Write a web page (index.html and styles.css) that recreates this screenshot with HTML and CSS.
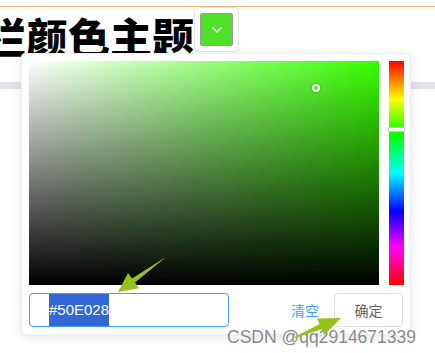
FILE: index.html
```html
<!DOCTYPE html>
<html lang="zh-CN">
<head>
  <meta charset="UTF-8" />
  <meta name="viewport" content="width=device-width, initial-scale=1.0"/>
  <title>栏颜色主题</title>
  <link rel="stylesheet" href="styles.css">
</head>
<body>
  <div class="topline"></div>
  <div class="head">
    <h1 class="title">栏颜色主题</h1>
    <div class="picker">
      <span class="picker-color">
        <svg width="12" height="8" viewBox="0 0 12 8"><path d="M1.5 1.5 L6 6 L10.5 1.5" fill="none" stroke="#fff" stroke-width="1.3"/></svg>
      </span>
    </div>
  </div>
  <div class="divider"></div>

  <div class="dropdown">
    <div class="dropdown-main">
      <div class="svpanel">
        <div class="svpanel-white"></div>
        <div class="svpanel-black"></div>
        <span class="svpanel-cursor"></span>
      </div>
      <div class="hue">
        <span class="hue-thumb"></span>
      </div>
    </div>
    <div class="dropdown-btns">
      <div class="value-input"><span class="selected">#50E028</span></div>
      <span class="link-btn">清空</span>
      <button class="ok-btn">确定</button>
    </div>
  </div>

  <div class="watermark">CSDN @qq2914671339</div>

  <svg class="marks" width="435" height="353" viewBox="0 0 435 353">
    <polygon points="166,257 135,282.6 139,288.2 118,292 128,273.1 132,278.4" fill="#95c11f"/>
    <polygon points="289,340 321.6,329.2 324.2,335 341,318 317,318.4 319.6,324" fill="#95c11f"/>
  </svg>
</body>
</html>
```

FILE: styles.css
```css
body {
  margin: 0;
  width: 435px;
  height: 353px;
  overflow: hidden;
  position: relative;
  background: #fff;
  font-family: 'Liberation Sans', 'Noto Sans CJK SC', sans-serif;
}

.topline {
  height: 6px;
  border-bottom: 1px solid #e9b47a;
}

.head {
  display: flex;
  align-items: flex-start;
  height: 46px;
}

.title {
  margin: 8px 0 0 -16px;
  font-family: 'Noto Sans CJK SC', sans-serif;
  font-size: 42px;
  line-height: 42px;
  font-weight: 900;
  color: #000;
  white-space: nowrap;
}

.picker {
  width: 45px;
  height: 45px;
  box-sizing: border-box;
  padding: 5px;
  border: 1px solid #e6e6e6;
  border-radius: 4px;
}

.picker-color {
  display: flex;
  justify-content: center;
  align-items: center;
  width: 100%;
  height: 100%;
  box-sizing: border-box;
  border: 1px solid #999;
  border-radius: 2px;
  background: #50e028;
}

.divider {
  margin-top: 29px;
  height: 7px;
  background: #e0e3eb;
}

.dropdown {
  position: absolute;
  left: 21px;
  top: 53px;
  width: 390px;
  box-sizing: border-box;
  padding: 7px 6px 7px 7px;
  background: #fff;
  border: 1px solid #ebeef5;
  border-radius: 4px;
  box-shadow: 0 2px 12px 0 rgba(0,0,0,0.1);
}

.dropdown-main {
  display: flex;
  gap: 10px;
}

.svpanel {
  position: relative;
  width: 350px;
  height: 224px;
  background: #37ff00;
}

.svpanel-white,
.svpanel-black {
  position: absolute;
  inset: 0;
}

.svpanel-white {
  background: linear-gradient(to right, #fff, rgba(255,255,255,0));
}

.svpanel-black {
  background: linear-gradient(to top, #000, rgba(0,0,0,0));
}

.svpanel-cursor {
  position: absolute;
  left: 283px;
  top: 23px;
  width: 4px;
  height: 4px;
  border: 2px solid #fff;
  border-radius: 50%;
  box-shadow: 0 0 1px 0.5px rgba(0,0,0,0.3);
}

.hue {
  position: relative;
  width: 15px;
  height: 224px;
  background: linear-gradient(to bottom, #f00 0%, #ff0 17%, #0f0 33%, #0ff 50%, #00f 67%, #f0f 83%, #f00 100%);
}

.hue-thumb {
  position: absolute;
  left: -1px;
  top: 66px;
  width: 17px;
  height: 5px;
  box-sizing: border-box;
  background: #fff;
  border: 1px solid #c8c8c8;
  border-radius: 1px;
}

.dropdown-btns {
  display: flex;
  align-items: center;
  margin-top: 8px;
}

.value-input {
  width: 200px;
  height: 34px;
  box-sizing: border-box;
  padding-left: 19px;
  border: 1px solid #409eff;
  border-radius: 4px;
}

.selected {
  display: inline-block;
  height: 32px;
  line-height: 32px;
  font-size: 15px;
  color: #fff;
  background: #3168d5;
}

.link-btn {
  margin-left: 62px;
  font-family: 'Noto Sans CJK SC', sans-serif;
  font-size: 14px;
  color: #409eff;
}

.ok-btn {
  margin-left: 15px;
  width: 69px;
  height: 34px;
  padding: 0;
  background: #fff;
  border: 1px solid #dcdfe6;
  border-radius: 4px;
  font-family: 'Noto Sans CJK SC', sans-serif;
  font-size: 14px;
  color: #606266;
}

.watermark {
  position: absolute;
  left: 227px;
  top: 327px;
  font-size: 17.5px;
  line-height: 20px;
  color: rgba(100,100,100,0.75);
  white-space: nowrap;
}

.marks {
  position: absolute;
  left: 0;
  top: 0;
  pointer-events: none;
}
```
